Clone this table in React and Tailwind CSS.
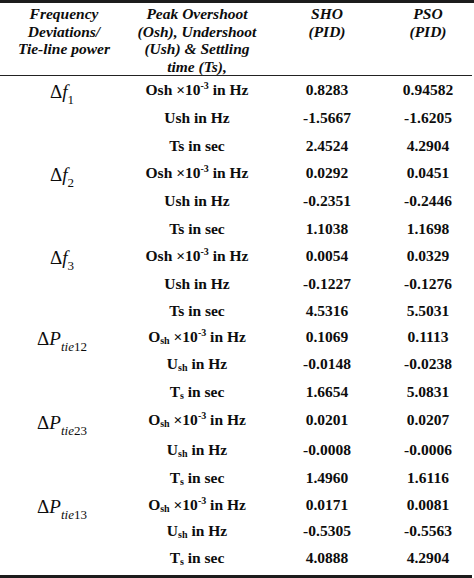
import React from 'react';

const groups = [
  { label: { sym: 'f', sub: '1' }, sub: false, vals: [['0.8283', '0.94582'], ['-1.5667', '-1.6205'], ['2.4524', '4.2904']] },
  { label: { sym: 'f', sub: '2' }, sub: false, vals: [['0.0292', '0.0451'], ['-0.2351', '-0.2446'], ['1.1038', '1.1698']] },
  { label: { sym: 'f', sub: '3' }, sub: false, vals: [['0.0054', '0.0329'], ['-0.1227', '-0.1276'], ['4.5316', '5.5031']] },
  { label: { sym: 'P', sub: '12', tie: true }, sub: true, vals: [['0.1069', '0.1113'], ['-0.0148', '-0.0238'], ['1.6654', '5.0831']] },
  { label: { sym: 'P', sub: '23', tie: true }, sub: true, vals: [['0.0201', '0.0207'], ['-0.0008', '-0.0006'], ['1.4960', '1.6116']] },
  { label: { sym: 'P', sub: '13', tie: true }, sub: true, vals: [['0.0171', '0.0081'], ['-0.5305', '-0.5563'], ['4.0888', '4.2904']] },
];

// row heights measured from the reference, top to bottom
const rowH = [
  'h-[27.6px]', 'h-[28.4px]', 'h-[26.3px]',
  'h-[28.4px]', 'h-[28.3px]', 'h-[26.6px]',
  'h-[28px]', 'h-[27.9px]', 'h-[26.2px]',
  'h-[26px]', 'h-[27.2px]', 'h-[28.6px]',
  'h-[29.2px]', 'h-[29.1px]', 'h-[27.5px]',
  'h-[26.4px]', 'h-[26.7px]', 'h-[26.7px]',
];

function Delta({ sym, sub, tie }) {
  return (
    <span className="text-[19px] font-normal leading-none whitespace-nowrap">
      Δ<i>{sym}</i>
      <span className="relative top-[6px] text-[13px]">
        {tie && <i>tie</i>}
        {sub}
      </span>
    </span>
  );
}

function Param({ kind, sub }) {
  const small = 'relative top-[2px] text-[10px]';
  if (kind === 0) {
    return (
      <span className="whitespace-nowrap">
        O{sub ? <span className={small}>sh</span> : 'sh'} ×10
        <span className="relative -top-[6px] text-[10px]">-3</span> in Hz
      </span>
    );
  }
  if (kind === 1) {
    return (
      <span className="whitespace-nowrap">
        U{sub ? <span className={small}>sh</span> : 'sh'} in Hz
      </span>
    );
  }
  return (
    <span className="whitespace-nowrap">
      T{sub ? <span className={small}>s</span> : 's'} in sec
    </span>
  );
}

export default function App() {
  let r = 0;
  return (
    <div className="w-[474px] h-[578px] bg-white text-[#0d0d0d] font-['Liberation_Serif','Times_New_Roman',serif] overflow-hidden">
      <div className="h-[3px] w-full bg-[#1c1c1c]" />
      <div className="w-[472px]">
        {/* Header */}
        <div className="flex pt-[2px] border-b border-[#222] font-bold italic text-[15.5px] leading-[17.5px] text-center h-[73px]">
          <div className="w-[124px] pl-[4px]">Frequency<br />Deviations/<br />Tie-line power</div>
          <div className="w-[146px]">Peak Overshoot<br />(Osh), Undershoot<br />(Ush) &amp; Settling<br />time (Ts),</div>
          <div className="w-[114px]">SHO<br />(PID)</div>
          <div className="w-[88px]">PSO<br />(PID)</div>
        </div>

        {/* Body */}
        <div className="pb-[4px] border-b-[3px] border-[#1c1c1c] font-bold text-[15.5px]">
          {groups.map((g, gi) => (
            <div key={gi}>
              {g.vals.map((v, k) => {
                const h = rowH[r++];
                return (
                  <div key={k} className={`flex items-center ${h}`}>
                    <div className="w-[124px] flex justify-center pt-[4px]">
                      {k === 0 && <Delta {...g.label} />}
                    </div>
                    <div className="w-[146px] text-center">
                      <Param kind={k} sub={g.sub} />
                    </div>
                    <div className="w-[114px] text-center">{v[0]}</div>
                    <div className="w-[88px] text-center">{v[1]}</div>
                  </div>
                );
              })}
            </div>
          ))}
        </div>
      </div>
    </div>
  );
}
